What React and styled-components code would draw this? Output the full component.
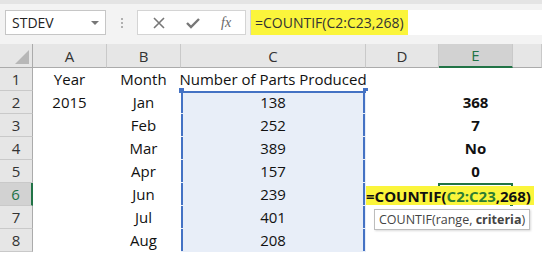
import React from "react";
import styled, { createGlobalStyle } from "styled-components";

const GlobalStyle = createGlobalStyle`
  body {
    margin: 0;
    background: #fff;
    font-family: "Open Sans", "Noto Sans", sans-serif;
    overflow: hidden;
  }
`;

const GREEN = "#217346";
const BLUE = "#4472c4";

const Page = styled.div`
  width: 542px;
  height: 253px;
  overflow: hidden;
`;

const Toolbar = styled.div`
  height: 42px;
  box-sizing: border-box;
  padding-top: 10px;
  background: #f3f3f3;
  border-top: 4px solid #e4e4e4;
  display: flex;
  align-items: flex-start;
  padding-top: 6px;
`;

const NameBox = styled.div`
  margin-left: 5px;
  width: 101px;
  height: 25px;
  box-sizing: border-box;
  background: #fff;
  border: 1px solid #c6c6c6;
  display: flex;
  align-items: center;
  justify-content: space-between;
  padding: 0 6px 0 6px;
  font-size: 14px;
  color: #222;
`;

const Caret = styled.span`
  width: 0;
  height: 0;
  border-left: 4px solid transparent;
  border-right: 4px solid transparent;
  border-top: 4px solid #777;
`;

const Dots = styled.div`
  width: 31px;
  height: 25px;
  display: flex;
  flex-direction: column;
  align-items: center;
  justify-content: center;
  gap: 2px;

  span {
    width: 2px;
    height: 2px;
    background: #b0b0b0;
  }
`;

const FxBox = styled.div`
  width: 109px;
  height: 25px;
  box-sizing: border-box;
  background: #fff;
  border: 1px solid #d4d4d4;
  display: flex;
  align-items: center;
  justify-content: space-around;
  padding: 0 4px;
`;

const FxLabel = styled.span`
  font-family: "Liberation Serif", serif;
  font-style: italic;
  font-size: 14px;
  color: #666;
`;

const FormulaInput = styled.div`
  flex: 1;
  margin-left: 4px;
  height: 25px;
  box-sizing: border-box;
  background: #fff;
  border-left: 1px solid #d4d4d4;
  display: flex;
  align-items: center;
`;

const Highlight = styled.span`
  background: #fbf53b;
  height: 100%;
  display: flex;
  align-items: center;
  padding: 0 4px 0 4px;
  font-size: 14px;
  color: #333;
`;

const Sheet = styled.div`
  display: grid;
  grid-template-columns: 33px 74px 74px 185px 73px 74px 1fr;
  grid-template-rows: 26px repeat(8, 23px);
  background: #f3f3f3;
`;

const ColHead = styled.div`
  background: ${(p) => (p.$active ? "#d2d2d2" : "#e6e6e6")};
  color: ${(p) => (p.$active ? GREEN : "#333")};
  border-right: 1px solid #c9c9c9;
  border-bottom: ${(p) => (p.$active ? `2px solid ${GREEN}` : "1px solid #ababab")};
  margin-top: 2px;
  display: flex;
  align-items: center;
  justify-content: center;
  font-size: 15px;
  box-sizing: border-box;
`;

const Corner = styled.div`
  background: #e6e6e6;
  margin-top: 2px;
  border-right: 1px solid #ababab;
  border-bottom: 1px solid #ababab;
  box-sizing: border-box;
  display: flex;
  align-items: flex-end;
  justify-content: flex-end;
  padding: 0 3px 3px 0;

  span {
    width: 0;
    height: 0;
    border-left: 14px solid transparent;
    border-bottom: 14px solid #b7b7b7;
  }
`;

const RowHead = styled.div`
  background: ${(p) => (p.$active ? "#d2d2d2" : "#e6e6e6")};
  color: ${(p) => (p.$active ? GREEN : "#333")};
  border-right: ${(p) => (p.$active ? `2px solid ${GREEN}` : "1px solid #ababab")};
  border-bottom: 1px solid #c9c9c9;
  display: flex;
  align-items: center;
  justify-content: center;
  font-size: 15px;
  box-sizing: border-box;
`;

const Cell = styled.div`
  position: relative;
  background: ${(p) => (p.$selected ? "#e8eef8" : "#fff")};
  border-right: 1px solid ${(p) => (p.$selected ? "#e8eef8" : "#fff")};
  border-bottom: 1px solid ${(p) => (p.$selected ? "#e8eef8" : "#fff")};
  box-shadow: ${(p) =>
    p.$selected
      ? `inset 2px 0 0 ${BLUE}, inset -2px 0 0 ${BLUE}${p.$top ? `, inset 0 2px 0 ${BLUE}` : ""}`
      : "none"};
  display: flex;
  align-items: center;
  justify-content: center;
  font-size: 15px;
  font-weight: ${(p) => (p.$bold ? 700 : 400)};
  color: #111;
  box-sizing: border-box;
  white-space: nowrap;
`;

const Handle = styled.span`
  position: absolute;
  top: -3px;
  ${(p) => (p.$side === "left" ? "left: -2px;" : "right: -3px;")}
  width: 5px;
  height: 5px;
  background: ${BLUE};
`;

const ActiveBorder = styled.span`
  position: absolute;
  left: -1px;
  right: -1px;
  top: 0;
  bottom: 0;
  border: 2px solid ${GREEN};
`;

const FillHandle = styled.span`
  position: absolute;
  right: -4px;
  bottom: -3px;
  width: 5px;
  height: 5px;
  background: ${GREEN};
  border: 1px solid #fff;
`;

const EditText = styled.span`
  position: absolute;
  left: -73px;
  top: 3px;
  height: 19px;
  background: #fbf53b;
  display: flex;
  align-items: center;
  padding: 0 3px 0 0;
  font-size: 15px;
  font-weight: 700;
  color: #111;
  z-index: 2;
`;

const RefText = styled.span`
  color: #2e7d32;
`;

const Tooltip = styled.div`
  position: absolute;
  left: -65px;
  top: 26px;
  z-index: 3;
  background: #fff;
  border: 1px solid #bdbdbd;
  box-shadow: 1px 1px 2px rgba(0, 0, 0, 0.15);
  padding: 1px 4px;
  font-size: 12.5px;
  color: #444;
  font-weight: 400;

  b {
    font-weight: 700;
  }
`;

const columns = ["A", "B", "C", "D", "E", ""];

const rows = [
  ["Year", "Month", "Number of Parts Produced", "", ""],
  ["2015", "Jan", "138", "", "368"],
  ["", "Feb", "252", "", "7"],
  ["", "Mar", "389", "", "No"],
  ["", "Apr", "157", "", "0"],
  ["", "Jun", "239", "", null],
  ["", "Jul", "401", "", ""],
  ["", "Aug", "208", "", ""],
];

const XIcon = () => (
  <svg width="14" height="14" viewBox="0 0 14 14">
    <path d="M2 2 L12 12 M12 2 L2 12" stroke="#777" strokeWidth="1.6" fill="none" />
  </svg>
);

const CheckIcon = () => (
  <svg width="16" height="14" viewBox="0 0 16 14">
    <path d="M2 7 L6 11 L14 3" stroke="#777" strokeWidth="2.4" fill="none" />
  </svg>
);

const ActiveCell = () => (
  <>
    <ActiveBorder />
    <FillHandle />
    <EditText>
      =COUNTIF(<RefText>C2:C23</RefText>,268)
    </EditText>
    <Tooltip>
      COUNTIF(range, <b>criteria</b>)
    </Tooltip>
  </>
);

const App = () => {
  return (
    <Page>
      <GlobalStyle />
      <Toolbar>
        <NameBox>
          STDEV
          <Caret />
        </NameBox>
        <Dots>
          <span />
          <span />
          <span />
        </Dots>
        <FxBox>
          <XIcon />
          <CheckIcon />
          <FxLabel>fx</FxLabel>
        </FxBox>
        <FormulaInput>
          <Highlight>=COUNTIF(C2:C23,268)</Highlight>
        </FormulaInput>
      </Toolbar>
      <Sheet>
        <Corner>
          <span />
        </Corner>
        {columns.map((c, i) => (
          <ColHead key={i} $active={c === "E"}>
            {c}
          </ColHead>
        ))}
        {rows.map((r, ri) => (
          <React.Fragment key={ri}>
            <RowHead $active={ri === 5}>{ri + 1}</RowHead>
            {r.map((v, ci) => {
              const selected = ci === 2 && ri > 0;
              return (
                <Cell
                  key={ci}
                  $selected={selected}
                  $top={selected && ri === 1}
                  $bold={ci === 4}
                >
                  {selected && ri === 1 && (
                    <>
                      <Handle $side="left" />
                      <Handle $side="right" />
                    </>
                  )}
                  {v === null ? <ActiveCell /> : v}
                </Cell>
              );
            })}
            <Cell />
          </React.Fragment>
        ))}
      </Sheet>
    </Page>
  );
};

export default App;
